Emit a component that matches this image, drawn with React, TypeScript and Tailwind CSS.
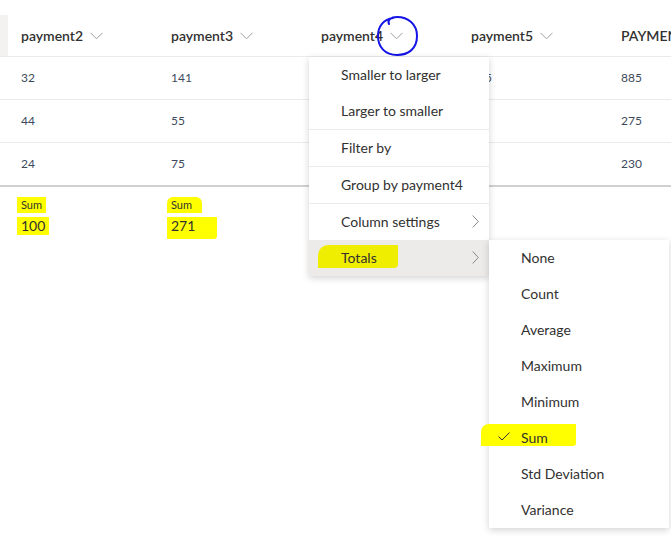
import React from 'react';

const COLUMNS = ['payment2', 'payment3', 'payment4', 'payment5', 'PAYMENT6'];

const ROWS = [
    ['32', '141', '96', '125', '885'],
    ['44', '55', '12', '40', '275'],
    ['24', '75', '30', '60', '230'],
];

const SORT_ITEMS = [
    ['Smaller to larger', 'Larger to smaller'],
    ['Filter by'],
    ['Group by payment4'],
];

const TOTALS = ['None', 'Count', 'Average', 'Maximum', 'Minimum', 'Sum', 'Std Deviation', 'Variance'];

function ChevronDown() {
    return (
        <svg width="13" height="8" viewBox="0 0 13 8" className="ml-[7px] mt-[1px]">
            <path d="M0.5 0.8 L6.5 6.8 L12.5 0.8" fill="none" stroke="#a19f9d" strokeWidth="1" />
        </svg>
    );
}

function ChevronRight() {
    return (
        <svg width="7" height="13" viewBox="0 0 7 13">
            <path d="M0.7 0.5 L6.3 6.5 L0.7 12.5" fill="none" stroke="#8a8886" strokeWidth="1" />
        </svg>
    );
}

export default function App() {
    return (
        <div
            className="relative w-[671px] h-[536px] overflow-hidden bg-white text-[#323130]"
            style={{ fontFamily: '"Segoe UI", Lato, "Open Sans", sans-serif' }}
        >
            {/* Header */}
            <div className="mt-[15px] flex h-[42px] border-b border-[#edebe9]">
                <div className="w-[8px] shrink-0 bg-[#f3f2f1]" />
                {COLUMNS.map(col => (
                    <div key={col} className="flex w-[150px] shrink-0 items-center pl-[13px] text-[14px] font-semibold whitespace-nowrap">
                        {col}
                        <ChevronDown />
                    </div>
                ))}
            </div>

            {/* Rows */}
            {ROWS.map((row, i) => (
                <div
                    key={i}
                    className={`flex pl-[8px] ${i === ROWS.length - 1 ? 'h-[44px] border-b-2 border-[#d2d0ce]' : 'h-[43px] border-b border-[#edebe9]'}`}
                >
                    {row.map((v, j) => (
                        <div key={j} className="flex w-[150px] shrink-0 items-center pl-[13px] text-[12px] text-[#3d4a5c]">
                            {v}
                        </div>
                    ))}
                </div>
            ))}

            {/* Footer totals */}
            <div className="flex pl-[8px] pt-[8px]">
                {['100', '271'].map((v, j) => (
                    <div key={j} className="w-[150px] shrink-0 pl-[9px]">
                        <div className="leading-[16px]">
                            <span className={`inline-block bg-[#ffff00] px-[4px] text-[11px] ${j === 1 ? 'pr-[10px] rounded-t-[6px]' : ''}`}>Sum</span>
                        </div>
                        <div className="mt-[3px] leading-[18px]">
                            <span className={`inline-block bg-[#ffff00] px-[4px] text-[14px] ${j === 1 ? 'pr-[22px] pb-[4px] rounded-br-[3px]' : ''}`}>{v}</span>
                        </div>
                    </div>
                ))}
            </div>

            {/* Hand-drawn circle around the payment4 chevron */}
            <svg className="absolute left-[372px] top-[12px]" width="50" height="48" viewBox="0 0 50 48">
                <path
                    d="M17 12 C15 8 19 5 25 5 C36 5 45 12 45 24 C45 37 36 43 25 43 C13 43 6 35 6 24 C6 14 12 7 21 6"
                    fill="none"
                    stroke="#1414e6"
                    strokeWidth="2"
                    strokeLinecap="round"
                />
            </svg>

            {/* Column menu */}
            <div className="absolute left-[309px] top-[57px] w-[180px] bg-white shadow-[0_2px_7px_rgba(0,0,0,0.18)]">
                {SORT_ITEMS.map((group, gi) => (
                    <div key={gi} className="border-b border-[#edebe9]">
                        {group.map(label => (
                            <div key={label} className="flex h-[36px] items-center pb-[2px] pl-[32px] text-[14px] whitespace-nowrap">
                                {label}
                            </div>
                        ))}
                    </div>
                ))}
                <div className="flex h-[36px] items-center justify-between pb-[2px] pl-[32px] pr-[10px] text-[14px]">
                    Column settings
                    <ChevronRight />
                </div>
                <div className="relative flex h-[36px] items-center justify-between bg-[#edebe9] pb-[2px] pl-[32px] pr-[10px] text-[14px]">
                    <span className="absolute left-[9px] top-[5px] h-[23px] w-[80px] rounded-tl-[10px] rounded-br-[4px] bg-[#f0ee00]" />
                    <span className="relative">Totals</span>
                    <ChevronRight />
                </div>
            </div>

            {/* Totals submenu */}
            <div className="absolute left-[489px] top-[240px] w-[180px] bg-white shadow-[0_2px_7px_rgba(0,0,0,0.18)]">
                {TOTALS.map(t => (
                    <div key={t} className="relative flex h-[36px] items-center pb-[2px] pl-[32px] text-[14px] whitespace-nowrap">
                        {t === 'Sum' && (
                            <>
                                <span className="absolute left-[-8px] top-[4px] h-[22px] w-[95px] rounded-tl-[8px] rounded-br-[3px] bg-[#ffff00]" />
                                <svg className="absolute left-[9px] top-[12px]" width="12" height="9" viewBox="0 0 12 9">
                                    <path d="M0.5 4.5 L4 8 L11.5 0.5" fill="none" stroke="#323130" strokeWidth="1" />
                                </svg>
                            </>
                        )}
                        <span className="relative">{t}</span>
                    </div>
                ))}
            </div>
        </div>
    );
}
